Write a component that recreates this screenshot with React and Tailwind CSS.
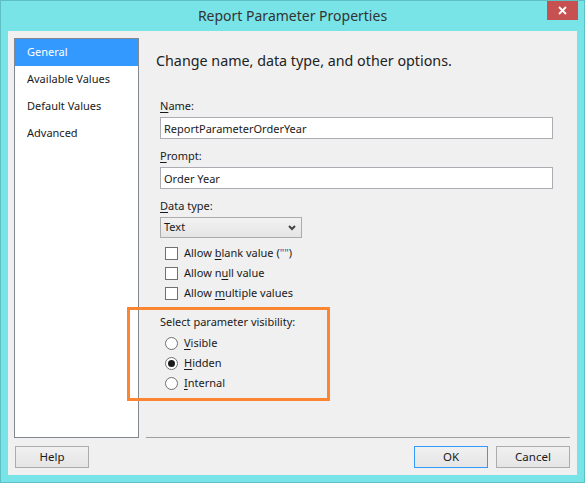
import { useState } from 'react'

const FONT = { fontFamily: '"Segoe UI", "Noto Sans", sans-serif' }

const PAGES = ['General', 'Available Values', 'Default Values', 'Advanced']

function U({ children }) {
  return <span className="underline underline-offset-2">{children}</span>
}

function Check({ label }) {
  return (
    <label className="flex items-center h-[20px] pl-[5px]">
      <span className="w-[13px] h-[13px] border border-[#707070] bg-white" />
      <span className="ml-[6px]">{label}</span>
    </label>
  )
}

function Radio({ checked, label }) {
  return (
    <label className="flex items-center h-[20px] pl-[5px]">
      <span className="w-[13px] h-[13px] rounded-full border border-[#707070] bg-white flex items-center justify-center">
        {checked && <span className="w-[7px] h-[7px] rounded-full bg-[#1a1a1a]" />}
      </span>
      <span className="ml-[6px]">{label}</span>
    </label>
  )
}

function Button({ children, primary }) {
  return (
    <button
      className={`w-[74px] h-[22px] border bg-gradient-to-b from-[#f0f0f0] to-[#e5e5e5] text-[11.5px] text-[#1a1a1a] ${primary ? 'border-[#3399ff]' : 'border-[#acacac]'}`}
    >
      {children}
    </button>
  )
}

export default function App() {
  const [page, setPage] = useState('General')

  return (
    <div
      style={FONT}
      className="relative w-[585px] h-[483px] bg-[#78e4e7] border border-[#5fbfc2] flex flex-col text-[11px] text-[#1a1a1a] overflow-hidden"
    >
      {/* title bar */}
      <div className="h-[30px] flex items-center justify-center relative shrink-0">
        <span className="text-[14px] text-[#333] -mt-[2px]">Report Parameter Properties</span>
        <div className="absolute right-[6px] top-[-1px] w-[31px] h-[20px] bg-[#c75050] flex items-center justify-center">
          <svg width="9" height="9" viewBox="0 0 9 9">
            <path d="M1 1 L8 8 M8 1 L1 8" stroke="white" strokeWidth="1.8" />
          </svg>
        </div>
      </div>

      {/* body */}
      <div className="mx-[7px] h-[444px] bg-[#f0f0f0] flex flex-col pl-[6px] pr-[7px] pt-[7px]">
        <div className="flex h-[400px]">
          <div className="w-[125px] h-full bg-white border border-[#828790]">
            {PAGES.map(p => (
              <div
                key={p}
                onClick={() => setPage(p)}
                className={`h-[27px] flex items-center pl-[12px] ${page === p ? 'bg-[#3399ff] text-white' : 'text-[#1a1a1a]'}`}
              >
                {p}
              </div>
            ))}
          </div>

          <div className="flex-1 ml-[7px] border-b border-[#a0a0a0] flex flex-col pl-[14px]">
            <div className="text-[14.3px] text-[#222] mt-[13px] -ml-[4px] h-[20px] leading-[20px]">
              Change name, data type, and other options.
            </div>

            <div className="mt-[27px] leading-[16px]"><U>N</U>ame:</div>
            <input
              readOnly
              value="ReportParameterOrderYear"
              className="mt-[3px] w-[393px] h-[22px] border border-[#abadb3] bg-white px-[3px] outline-none"
            />

            <div className="mt-[9px] leading-[16px]"><U>P</U>rompt:</div>
            <input
              readOnly
              value="Order Year"
              className="mt-[3px] w-[393px] h-[22px] border border-[#abadb3] bg-white px-[3px] outline-none"
            />

            <div className="mt-[9px] leading-[16px]"><U>D</U>ata type:</div>
            <div className="mt-[3px] w-[142px] h-[21px] border border-[#acacac] bg-gradient-to-b from-[#f2f2f2] to-[#e5e5e5] flex items-center justify-between pl-[3px] pr-[5px]">
              <span>Text</span>
              <svg width="8" height="6" viewBox="0 0 8 6">
                <path d="M1 1 L4 4 L7 1" stroke="#444" strokeWidth="2" fill="none" />
              </svg>
            </div>

            <div className="mt-[5px] flex flex-col">
              <Check label={<>Allow <U>b</U>lank value (<span className="text-[#1a5fb4]">""</span>)</>} />
              <Check label={<>Allow n<U>u</U>ll value</>} />
              <Check label={<>Allow <U>m</U>ultiple values</>} />
            </div>

            <div className="mt-[11px] leading-[16px]">Select parameter visibility:</div>
            <div className="mt-[3px] flex flex-col">
              <Radio label={<><U>V</U>isible</>} />
              <Radio checked label={<><U>H</U>idden</>} />
              <Radio label={<><U>I</U>nternal</>} />
            </div>
          </div>
        </div>

        <div className="mt-[8px] flex items-center justify-between pl-[1px]">
          <Button>Help</Button>
          <div className="flex gap-[8px]">
            <Button primary>OK</Button>
            <Button>Cancel</Button>
          </div>
        </div>
      </div>

      {/* annotation highlight */}
      <div className="absolute left-[126px] top-[306px] w-[203px] h-[94px] border-[3px] border-[#fb8530] pointer-events-none" />
    </div>
  )
}
